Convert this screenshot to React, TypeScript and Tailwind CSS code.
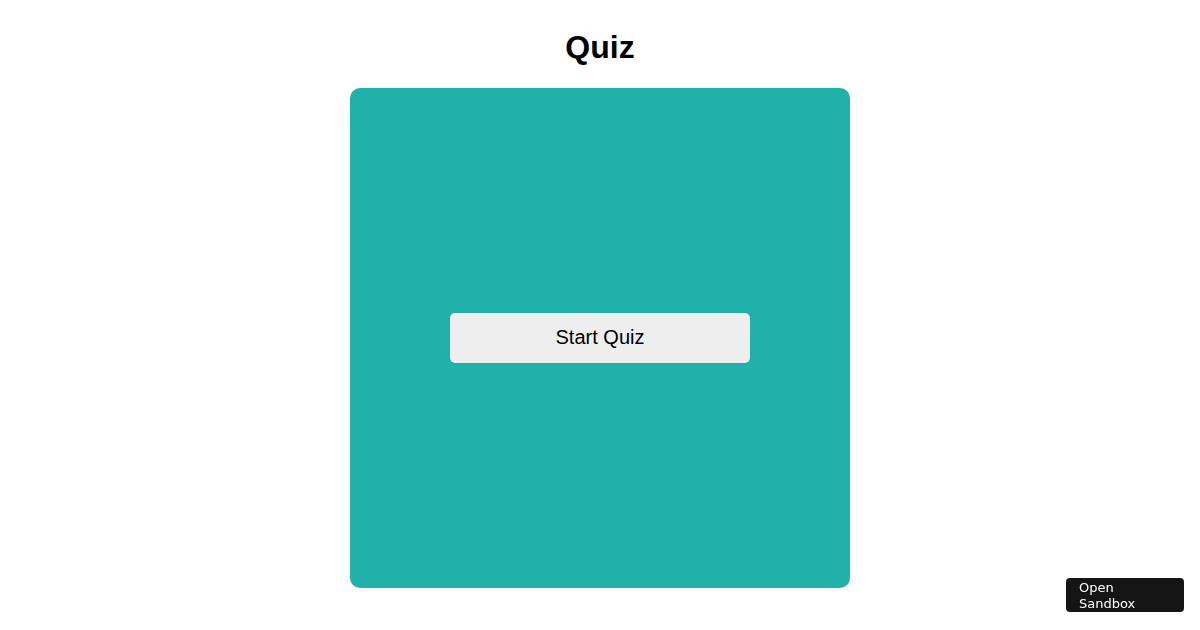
export default function App() {
  return (
    <div className="min-h-[630px] w-full bg-white font-['Liberation_Sans',Arial,sans-serif] text-black">
      {/* header */}
      <h1 className="pt-[29px] text-center text-[32px] font-bold leading-[37px]">
        Quiz
      </h1>

      {/* quiz card */}
      <div className="mx-auto mt-[22px] flex h-[500px] w-[500px] items-center justify-center rounded-[10px] bg-[#20b2aa]">
        <button className="h-[50px] w-[300px] rounded-[5px] bg-[#eeeeee] pb-[2px] text-[20px] text-black">
          Start Quiz
        </button>
      </div>

      {/* sandbox link */}
      <button className="fixed bottom-[18px] right-[16px] h-[34px] w-[118px] rounded-[4px] bg-[#151515] pl-[13px] pt-[2px] text-left font-['DejaVu_Sans',sans-serif] text-[13px] leading-[16px] text-white">
        <span className="block">Open</span>
        <span className="block">Sandbox</span>
      </button>
    </div>
  );
}
